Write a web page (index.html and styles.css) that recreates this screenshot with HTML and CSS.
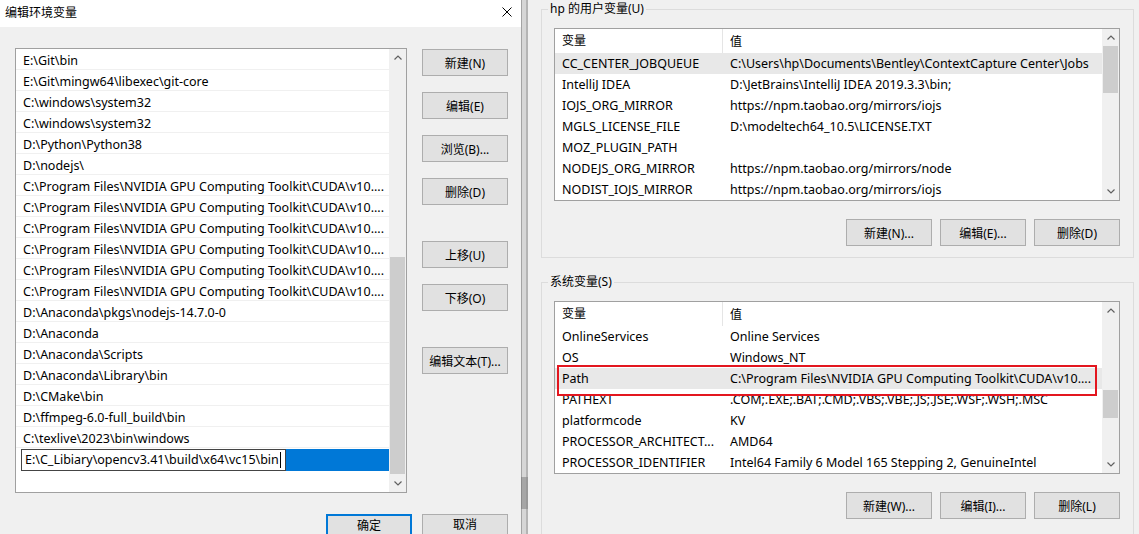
FILE: index.html
```html
<!DOCTYPE html>
<html lang="zh-CN">
<head>
    <meta charset="UTF-8">
    <meta name="viewport" content="width=device-width, initial-scale=1.0">
    <title>编辑环境变量</title>
    <link rel="stylesheet" href="styles.css">
</head>
<body>

<div class="screen">

    <div class="dialog">
        <div class="titlebar">
            <span class="title">编辑环境变量</span>
            <svg class="close" width="10" height="10" viewBox="0 0 10 10">
                <path d="M0.5 0.5 L9.5 9.5 M9.5 0.5 L0.5 9.5" stroke="#000" stroke-width="1" fill="none"/>
            </svg>
        </div>

        <div class="dialog-body">
            <div class="main">
                <div class="listbox">
                    <div class="rows">
                        <div class="row">E:\Git\bin</div>
                        <div class="row">E:\Git\mingw64\libexec\git-core</div>
                        <div class="row">C:\windows\system32</div>
                        <div class="row">C:\windows\system32</div>
                        <div class="row">D:\Python\Python38</div>
                        <div class="row">D:\nodejs\</div>
                        <div class="row">C:\Program Files\NVIDIA GPU Computing Toolkit\CUDA\v10....</div>
                        <div class="row">C:\Program Files\NVIDIA GPU Computing Toolkit\CUDA\v10....</div>
                        <div class="row">C:\Program Files\NVIDIA GPU Computing Toolkit\CUDA\v10....</div>
                        <div class="row">C:\Program Files\NVIDIA GPU Computing Toolkit\CUDA\v10....</div>
                        <div class="row">C:\Program Files\NVIDIA GPU Computing Toolkit\CUDA\v10....</div>
                        <div class="row">C:\Program Files\NVIDIA GPU Computing Toolkit\CUDA\v10....</div>
                        <div class="row">D:\Anaconda\pkgs\nodejs-14.7.0-0</div>
                        <div class="row">D:\Anaconda</div>
                        <div class="row">D:\Anaconda\Scripts</div>
                        <div class="row">D:\Anaconda\Library\bin</div>
                        <div class="row">D:\CMake\bin</div>
                        <div class="row">D:\ffmpeg-6.0-full_build\bin</div>
                        <div class="row">C:\texlive\2023\bin\windows</div>
                        <div class="edit-row">
                            <div class="editbox">E:\C_Libiary\opencv3.41\build\x64\vc15\bin<span class="caret"></span></div>
                            <div class="sel-fill"></div>
                        </div>
                    </div>
                    <div class="scrollbar">
                        <div class="arrow">
                            <svg width="8" height="5" viewBox="0 0 8 5"><polyline points="0.5,4.5 4,1 7.5,4.5" fill="none" stroke="#606060" stroke-width="1.2"/></svg>
                        </div>
                        <div class="track"><div class="thumb left-thumb"></div></div>
                        <div class="arrow">
                            <svg width="8" height="5" viewBox="0 0 8 5"><polyline points="0.5,0.5 4,4 7.5,0.5" fill="none" stroke="#606060" stroke-width="1.2"/></svg>
                        </div>
                    </div>
                </div>

                <div class="side-buttons">
                    <div class="btn">新建(N)</div>
                    <div class="btn">编辑(E)</div>
                    <div class="btn">浏览(B)...</div>
                    <div class="btn">删除(D)</div>
                    <div class="btn spaced">上移(U)</div>
                    <div class="btn">下移(O)</div>
                    <div class="btn spaced">编辑文本(T)...</div>
                </div>
            </div>

            <div class="footer-buttons">
                <div class="btn default">确定</div>
                <div class="btn">取消</div>
            </div>
        </div>
    </div>

    <div class="edge"><div class="edge-thumb"></div></div>

    <div class="env-window">
        <fieldset class="group user-group">
            <legend>hp 的用户变量(U)</legend>
            <div class="varlist">
                <div class="var-table">
                    <div class="var-head">
                        <div class="col-name">变量</div>
                        <div class="col-value">值</div>
                    </div>
                    <div class="var-row selected"><div class="col-name">CC_CENTER_JOBQUEUE</div><div class="col-value">C:\Users\hp\Documents\Bentley\ContextCapture Center\Jobs</div></div>
                    <div class="var-row"><div class="col-name">IntelliJ IDEA</div><div class="col-value">D:\JetBrains\IntelliJ IDEA 2019.3.3\bin;</div></div>
                    <div class="var-row"><div class="col-name">IOJS_ORG_MIRROR</div><div class="col-value">https://npm.taobao.org/mirrors/iojs</div></div>
                    <div class="var-row"><div class="col-name">MGLS_LICENSE_FILE</div><div class="col-value">D:\modeltech64_10.5\LICENSE.TXT</div></div>
                    <div class="var-row"><div class="col-name">MOZ_PLUGIN_PATH</div><div class="col-value"></div></div>
                    <div class="var-row"><div class="col-name">NODEJS_ORG_MIRROR</div><div class="col-value">https://npm.taobao.org/mirrors/node</div></div>
                    <div class="var-row"><div class="col-name">NODIST_IOJS_MIRROR</div><div class="col-value">https://npm.taobao.org/mirrors/iojs</div></div>
                </div>
                <div class="scrollbar">
                    <div class="arrow">
                        <svg width="8" height="5" viewBox="0 0 8 5"><polyline points="0.5,4.5 4,1 7.5,4.5" fill="none" stroke="#606060" stroke-width="1.2"/></svg>
                    </div>
                    <div class="track"><div class="thumb user-thumb"></div></div>
                    <div class="arrow">
                        <svg width="8" height="5" viewBox="0 0 8 5"><polyline points="0.5,0.5 4,4 7.5,0.5" fill="none" stroke="#606060" stroke-width="1.2"/></svg>
                    </div>
                </div>
            </div>
            <div class="group-buttons">
                <div class="btn">新建(N)...</div>
                <div class="btn">编辑(E)...</div>
                <div class="btn">删除(D)</div>
            </div>
        </fieldset>

        <fieldset class="group system-group">
            <legend>系统变量(S)</legend>
            <div class="varlist">
                <div class="var-table">
                    <div class="var-head">
                        <div class="col-name">变量</div>
                        <div class="col-value">值</div>
                    </div>
                    <div class="var-row"><div class="col-name">OnlineServices</div><div class="col-value">Online Services</div></div>
                    <div class="var-row"><div class="col-name">OS</div><div class="col-value">Windows_NT</div></div>
                    <div class="var-row selected"><div class="col-name">Path</div><div class="col-value">C:\Program Files\NVIDIA GPU Computing Toolkit\CUDA\v10....</div></div>
                    <div class="var-row"><div class="col-name">PATHEXT</div><div class="col-value">.COM;.EXE;.BAT;.CMD;.VBS;.VBE;.JS;.JSE;.WSF;.WSH;.MSC</div></div>
                    <div class="var-row"><div class="col-name">platformcode</div><div class="col-value">KV</div></div>
                    <div class="var-row"><div class="col-name">PROCESSOR_ARCHITECT...</div><div class="col-value">AMD64</div></div>
                    <div class="var-row"><div class="col-name">PROCESSOR_IDENTIFIER</div><div class="col-value">Intel64 Family 6 Model 165 Stepping 2, GenuineIntel</div></div>
                </div>
                <div class="scrollbar">
                    <div class="arrow">
                        <svg width="8" height="5" viewBox="0 0 8 5"><polyline points="0.5,4.5 4,1 7.5,4.5" fill="none" stroke="#606060" stroke-width="1.2"/></svg>
                    </div>
                    <div class="track"><div class="thumb system-thumb"></div></div>
                    <div class="arrow">
                        <svg width="8" height="5" viewBox="0 0 8 5"><polyline points="0.5,0.5 4,4 7.5,0.5" fill="none" stroke="#606060" stroke-width="1.2"/></svg>
                    </div>
                </div>
                <!-- red annotation round the Path row -->
                <div class="mark"></div>
            </div>
            <div class="group-buttons">
                <div class="btn">新建(W)...</div>
                <div class="btn">编辑(I)...</div>
                <div class="btn">删除(L)</div>
            </div>
        </fieldset>
    </div>

</div>

</body>
</html>
```

FILE: styles.css
```css
body {
    margin: 0;
    font-family: 'Noto Sans', 'Noto Sans CJK SC', sans-serif;
    font-size: 12.5px;
    color: #000;
    background: #f0f0f0;
    overflow: hidden;
}

.screen {
    display: flex;
    width: 1139px;
    height: 534px;
    overflow: hidden;
}

/* left dialog */

.dialog {
    width: 521px;
    flex-shrink: 0;
    display: flex;
    flex-direction: column;
    background: #f0f0f0;
}

.titlebar {
    height: 27px;
    box-sizing: border-box;
    flex-shrink: 0;
    background: #fff;
    display: flex;
    align-items: center;
    justify-content: space-between;
    padding: 0 9px 3px 5px;
}

.title {
    font-size: 12px;
}

.close {
    display: block;
}

.dialog-body {
    flex-shrink: 0;
    padding: 21px 13px 0 15px;
}

.main {
    display: flex;
    gap: 15px;
}

.listbox {
    width: 392px;
    height: 445px;
    box-sizing: border-box;
    border: 1px solid #a0a0a0;
    background: #fff;
    display: flex;
}

.rows {
    flex: 1;
    min-width: 0;
}

.row {
    height: 20px;
    line-height: 23px;
    border-bottom: 1px solid #f0f0f0;
    padding-left: 7px;
    white-space: nowrap;
    overflow: hidden;
}

.edit-row {
    height: 22px;
    display: flex;
    padding-left: 5px;
    margin-top: 1px;
}

.editbox {
    width: 265px;
    height: 22px;
    box-sizing: border-box;
    border: 1px solid #444;
    background: #fff;
    line-height: 20px;
    padding-left: 3px;
    white-space: nowrap;
    overflow: hidden;
}

.caret {
    display: inline-block;
    width: 1px;
    height: 16px;
    background: #000;
    vertical-align: -4px;
    margin-left: 1px;
}

.sel-fill {
    flex: 1;
    background: #0078d7;
}

.scrollbar {
    width: 17px;
    flex-shrink: 0;
    background: #f0f0f0;
    display: flex;
    flex-direction: column;
}

.arrow {
    height: 17px;
    display: flex;
    align-items: center;
    justify-content: center;
}

.arrow svg {
    display: block;
}

.track {
    flex: 1;
    padding: 0 1px;
}

.thumb {
    background: #cdcdcd;
}

.left-thumb {
    margin-top: 191px;
    height: 217px;
}

.user-thumb {
    height: 47px;
}

.system-thumb {
    margin-top: 71px;
    height: 28px;
}

.side-buttons {
    display: flex;
    flex-direction: column;
    gap: 16px;
    padding-top: 1px;
}

.btn {
    width: 86px;
    height: 27px;
    box-sizing: border-box;
    border: 1px solid #adadad;
    background: #e1e1e1;
    display: flex;
    align-items: center;
    justify-content: center;
    white-space: nowrap;
    font-size: 12px;
}

.btn.spaced {
    margin-top: 20px;
}

.btn.default {
    border: 2px solid #0078d7;
}

.footer-buttons {
    display: flex;
    justify-content: flex-end;
    gap: 10px;
    margin-top: 21px;
}

.footer-buttons .btn {
    align-items: flex-start;
    padding-top: 3px;
    line-height: 14px;
}

/* strip between the windows */

.edge {
    width: 7px;
    flex-shrink: 0;
    background: linear-gradient(to right, #a3a3a3 0 1px, #d6d6d6 1px 5px, #b4b4b4 5px);
}

.edge-thumb {
    margin-top: 477px;
    height: 32px;
    background: linear-gradient(to right, #8a8a8a 0 1px, #a6a6a6 1px 5px, #999 5px);
}

/* environment variables window */

.env-window {
    flex: 1;
    padding: 1px 5px 0 13px;
}

.group {
    margin: 0;
    border: 1px solid #dcdcdc;
    padding: 0 13px 11px 12px;
}

.group legend {
    margin-left: -6px;
    padding: 0 2px;
    line-height: 16px;
    font-size: 12px;
}

.user-group .varlist {
    margin-top: 11px;
}

.system-group {
    margin-top: 16px;
    padding-bottom: 20px;
}

.system-group .varlist {
    margin-top: 11px;
}

.varlist {
    position: relative;
    height: 173px;
    box-sizing: border-box;
    border: 1px solid #a0a0a0;
    background: #fff;
    display: flex;
}

.var-table {
    flex: 1;
    min-width: 0;
}

.var-head {
    height: 24px;
    display: flex;
    align-items: center;
    font-size: 12px;
}

.var-head .col-name {
    height: 24px;
    line-height: 24px;
    border-right: 1px solid #e5e5e5;
    box-sizing: border-box;
}

.var-row {
    height: 21px;
    line-height: 21px;
    display: flex;
}

.var-row.selected {
    background: #e8e8e8;
}

.col-name {
    width: 168px;
    flex-shrink: 0;
    padding-left: 7px;
    box-sizing: border-box;
    white-space: nowrap;
    overflow: hidden;
}

.col-value {
    flex: 1;
    padding-left: 7px;
    white-space: nowrap;
    overflow: hidden;
}

.mark {
    position: absolute;
    left: 2px;
    top: 63px;
    width: 540px;
    height: 31px;
    box-sizing: border-box;
    border: 2px solid #e3161f;
}

.group-buttons {
    display: flex;
    justify-content: flex-end;
    gap: 8px;
    margin-top: 18px;
}
```
